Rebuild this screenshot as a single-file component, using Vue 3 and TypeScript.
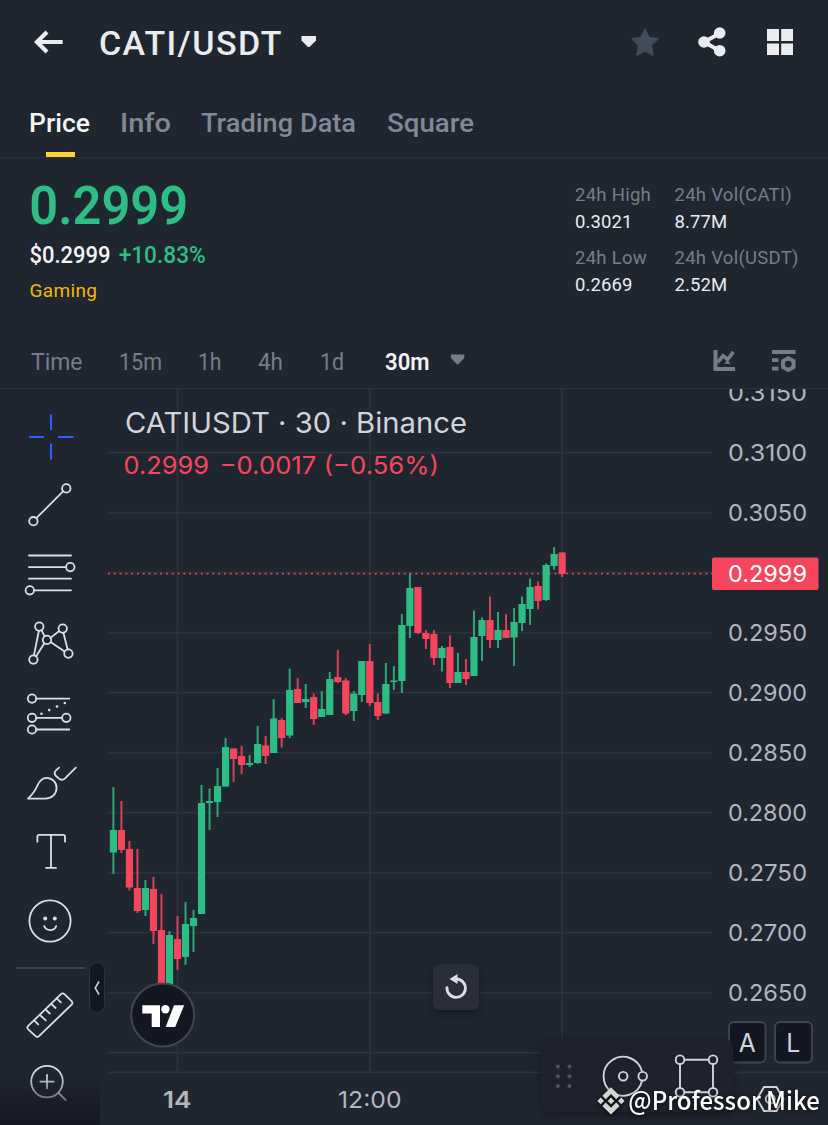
<script setup lang="ts">
type Candle = [high: number, top: number, bottom: number, low: number, up: 0 | 1]

const tabs = [
  { label: 'Price', width: 61 },
  { label: 'Info', width: 51 },
  { label: 'Trading Data', width: 155 },
  { label: 'Square', width: 87 },
]

const stats = [
  { label: '24h High', value: '0.3021' },
  { label: '24h Vol(CATI)', value: '8.77M' },
  { label: '24h Low', value: '0.2669' },
  { label: '24h Vol(USDT)', value: '2.52M' },
]

const intervals = [
  { label: 'Time', width: 51.5 },
  { label: '15m', width: 43 },
  { label: '1h', width: 23.5 },
  { label: '4h', width: 25 },
  { label: '1d', width: 24 },
]

const candles: Candle[] = [
  [787, 830, 852.5, 874, 1], [801, 830, 850, 853, 0], [841, 849, 887.5, 890.5, 0],
  [849, 888, 911, 913, 0], [880, 888, 910, 916, 1], [877, 889, 931, 944, 0],
  [894, 930, 984, 984, 0], [931, 935, 984, 984, 1], [916, 939, 959, 970, 0],
  [902, 924, 957, 965, 1], [910, 918, 926, 952, 1], [785, 803, 914, 914, 1],
  [788.5, 801, 803, 830, 1], [768, 786, 802, 817, 1], [738, 747, 786.5, 786.5, 1],
  [748.5, 748.5, 759, 782, 0], [746, 756, 765, 774, 0], [755, 763, 765, 767, 1],
  [726, 744, 763, 764, 1], [736, 745.5, 756, 764, 0], [699, 718.5, 753, 753, 1],
  [718, 720, 738, 747.5, 0], [668.5, 690, 735.5, 738, 1], [678, 689, 703, 703, 0],
  [684, 699, 702, 708, 1], [693.5, 697, 719, 725, 0], [691, 709, 717, 717, 1],
  [672, 679, 715, 715, 1], [650, 677, 682, 683, 0], [678, 680.5, 713.5, 715, 0],
  [691, 693.5, 711, 721, 1], [661, 661, 695, 702, 1], [644, 661, 703, 706, 0],
  [693.5, 702, 716, 720, 0], [663, 684, 713.5, 714, 1], [666, 680.5, 682, 690, 1],
  [614, 625, 681, 693, 1], [573.5, 588, 626, 638, 1], [587, 587, 633, 634, 0],
  [630, 633, 639, 649, 0], [630, 634, 658, 665, 0], [646, 648, 658, 671.5, 1],
  [635.5, 647, 683, 688, 0], [653, 672, 683, 683, 1], [659, 672, 679, 685, 0],
  [610.5, 637, 676, 676, 1], [617.5, 620, 636, 661, 1], [596.5, 620, 640, 648, 0],
  [612, 630, 640, 648, 1], [614, 630, 638, 638, 0], [608, 622, 637.5, 666, 1],
  [596.5, 604, 623, 631, 1], [578.5, 587, 609, 625, 1], [581.5, 586, 601, 609.5, 0],
  [563.5, 565, 600, 601, 1], [547, 554, 566, 570, 1], [552.5, 552.5, 574, 577, 0],
]
const candleX = (i: number) => 113.4 + i * 8.013

const priceLabels = ['0.3150', '0.3100', '0.3050', '', '0.2950', '0.2900', '0.2850', '0.2800', '0.2750', '0.2700', '0.2650']
const gridY = Array.from({ length: 11 }, (_, i) => 452.6 + i * 60)

interface Tool {
  name: string
  top: number
  height: number
  paths: string[]
  rings?: [number, number, number][]
  dots?: [number, number, number][]
  active?: boolean
}

const tools: Tool[] = [
  { name: 'cross', top: 401.5, height: 69.3, active: true, paths: ['M51 414V429.5M51 443V459M29 436.4H44M58 436.4H73.5'] },
  { name: 'trend', top: 470.8, height: 69.3, paths: ['M36.3 518L63.3 491'], rings: [[66.3, 488.2, 4.2], [33.4, 521, 4.2]] },
  { name: 'fib', top: 540.1, height: 69.3, paths: ['M29 555.6H71M29 567.3H66M29 578.8H71M34 590.4H71'], rings: [[70.3, 567.2, 4.2], [29.8, 590.4, 4.2]] },
  { name: 'pattern', top: 609.4, height: 69.3, paths: ['M38.9 631.2L33.9 655.8M41.5 630.6L44.7 636.8M50.3 638.3L59.3 631.4M63.3 633L67.7 649.8M50.6 642.5L64.6 651.9M44.4 643.6L36 656.8'], rings: [[39.3, 627, 4.2], [62.7, 629, 4.2], [47, 640.3, 4.2], [33.4, 660, 4.2], [68.4, 654, 4.2]] },
  { name: 'forecast', top: 678.7, height: 69.3, paths: ['M36.2 698.3H69.3M36.2 717.5H62M36.2 729.2H69.3'], rings: [[32, 698.3, 4.2], [32, 717.5, 4.2], [66.3, 717.5, 4.2], [32, 729.2, 4.2]], dots: [[41.5, 713.4, 1.3], [49.2, 709.8, 1.3], [57, 706.2, 1.3], [64.8, 702.7, 1.3]] },
  { name: 'brush', top: 748, height: 69.3, paths: ['M28 798.6C33 794 36 789 37.7 785C40 780 43 777.8 46.5 777.8C52 777.8 56.6 782.2 56.6 788C56.6 794 51.5 798.6 45 798.6Z', 'M59 767.6L56 770.3Q53.3 773 56 776L58.4 778.2Q61.8 781.3 65 778.3L75.8 767.6'] },
  { name: 'text', top: 817.3, height: 69.3, paths: ['M37.4 842V837Q37.4 835.2 39.2 835.2H63.2Q65 835.2 65 837V842M51 835.2V868.2M46 868.2H56'] },
  { name: 'emoji', top: 886.6, height: 69.3, paths: ['M44.2 925.6C46 931 54.6 931 56.2 925.6'], rings: [[50, 920.6, 20.6]], dots: [[45.2, 918, 2], [54.8, 918, 2]] },
]

const lowerTools: Tool[] = [
  { name: 'ruler', top: 980, height: 69, paths: ['M61 994.2Q62.7 992.5 64.4 994.2L71.6 1001.2Q73.3 1002.9 71.6 1004.6L39 1036.2Q37.3 1037.9 35.6 1036.2L28.2 1029.3Q26.5 1027.6 28.2 1025.9Z', 'M56.7 998.4L60.8 1002.4M51.2 1003.8L55.6 1008M45.5 1009.4L49.7 1013.5M39.8 1015L45.8 1020.3M34.2 1020.4L38.2 1024.4'] },
  { name: 'zoom', top: 1049, height: 69, paths: ['M40.3 1081.6H53.7M47 1075V1088.3', 'M58.5 1093L65.7 1100'], rings: [[47, 1081.6, 15.8]] },
]
</script>

<template>
  <main class="screen">
    <header class="topbar">
      <svg class="back" width="30" height="24" viewBox="0 0 30 24"><path d="M28.7 12H3M13 2L3 12L13 22" /></svg>
      <h1 class="pair">CATI/USDT</h1>
      <svg class="caret" width="16" height="12" viewBox="0 0 16 12"><path d="M.5 0H15V4.5L9 10.4Q7.7 11.5 6.4 10.4L.5 4.5Z" /></svg>
      <div class="actions">
        <svg width="30" height="30" viewBox="0 0 30 30"><path class="star" d="M15 2L18.8 10.6L27.9 11.7L21.2 18.2L23 28L15 23.6L7 28L8.8 18.2L2.1 11.7L11.2 10.6Z" /></svg>
        <svg width="30" height="30" viewBox="1 0 30 30"><path class="link" d="M7 15L22.5 6.5M7 15L22.5 23.7" /><circle cx="7" cy="15" r="5.8" /><circle cx="22.7" cy="6" r="5.8" /><circle cx="22.7" cy="23.7" r="5.8" /></svg>
        <svg width="30" height="30" viewBox="0 0 30 30"><path d="M2 2H14V14H2ZM16.2 2H28V14H16.2ZM2 16.4H14V28H2ZM16.2 16.4H28V28H16.2Z" /></svg>
      </div>
    </header>

    <nav class="tabs">
      <svg v-for="(t, i) in tabs" :key="t.label" class="tab" :class="{ current: i === 0 }" :width="t.width" height="40">
        <text x="0" y="26.5" :textLength="t.width" lengthAdjust="spacingAndGlyphs">{{ t.label }}</text>
      </svg>
    </nav>

    <section class="summary">
      <div class="quote">
        <svg class="last" width="170" height="50"><text x="-.8" y="43.3" textLength="159" lengthAdjust="spacingAndGlyphs">0.2999</text></svg>
        <svg class="change" width="190" height="30">
          <text x="-.5" y="22.8" textLength="81" lengthAdjust="spacingAndGlyphs">$0.2999</text>
          <text class="gain" x="88.7" y="22.8" textLength="87" lengthAdjust="spacingAndGlyphs">+10.83%</text>
        </svg>
        <a class="tag">Gaming</a>
      </div>
      <dl class="stats">
        <div v-for="s in stats" :key="s.label" class="stat">
          <dt>{{ s.label }}</dt>
          <dd>{{ s.value }}</dd>
        </div>
      </dl>
    </section>

    <nav class="intervals">
      <svg v-for="t in intervals" :key="t.label" :width="t.width" height="34">
        <text x="0" y="25.5" :textLength="t.width" lengthAdjust="spacingAndGlyphs">{{ t.label }}</text>
      </svg>
      <svg class="chosen" width="80" height="34">
        <text x="0" y="25.5" textLength="44.5" lengthAdjust="spacingAndGlyphs">30m</text>
        <path d="M66 10.5H79.3V14L73.5 20Q72.6 20.8 71.7 20L66 14Z" />
      </svg>
      <svg class="glyph" width="24" height="24" viewBox="0 0 24 24">
        <path d="M3.5 1V20H23" class="axis" /><path d="M5.5 13.5L11 6.7L15.5 10.5L21.5 2.8" class="line" /><path d="M12 14.7L15.3 11L18.6 14.7Z" />
      </svg>
      <svg class="glyph settings" width="26" height="26" viewBox="0 0 26 26">
        <path d="M1 1H24.5V5H1ZM1 9.3H7.5V13H1ZM1 17.7H7.5V21.5H1Z" />
        <path fill-rule="evenodd" d="M17.3 7L24.5 11V19.2L17.3 23.3L10.1 19.2V11ZM17.3 11.7A3.4 3.4 0 1 0 17.3 18.5A3.4 3.4 0 1 0 17.3 11.7Z" />
      </svg>
    </nav>

    <section class="workspace">
      <aside class="sidebar">
        <svg v-for="t in tools" :key="t.name" class="tool" :class="{ active: t.active }" width="100" :height="t.height" :viewBox="`0 ${t.top} 100 ${t.height}`">
          <path v-for="p in t.paths" :key="p" :d="p" />
          <circle v-for="(r, i) in t.rings" :key="'r' + i" :cx="r[0]" :cy="r[1]" :r="r[2]" />
          <circle v-for="(d, i) in t.dots" :key="'d' + i" class="dot" :cx="d[0]" :cy="d[1]" :r="d[2]" />
        </svg>
        <div class="rule"></div>
        <svg v-for="t in lowerTools" :key="t.name" class="tool" width="100" :height="t.height" :viewBox="`0 ${t.top} 100 ${t.height}`">
          <path v-for="p in t.paths" :key="p" :d="p" />
          <circle v-for="(r, i) in t.rings" :key="'r' + i" :cx="r[0]" :cy="r[1]" :r="r[2]" />
        </svg>
        <div class="fade"></div>
      </aside>

      <svg class="chart" width="728" height="736" viewBox="100 389 728 736">
        <g class="grid">
          <path v-for="y in gridY" :key="y" :d="`M108 ${y}H712`" />
          <path d="M177.5 389V1072M370 389V1072M562 389V1072M108 1072.3H828" />
        </g>
        <path class="last-line" d="M108 573.6H712" />
        <g v-for="(c, i) in candles" :key="i" :class="c[4] ? 'up' : 'down'">
          <rect class="wick" :x="candleX(i) - 1" :y="c[0]" width="2" :height="c[3] - c[0]" />
          <rect :x="candleX(i) - 3.6" :y="c[1]" width="7.2" :height="c[2] - c[1]" />
        </g>
        <text class="symbol" x="125" y="432.5" textLength="342" lengthAdjust="spacingAndGlyphs">CATIUSDT · 30 · Binance</text>
        <g class="legend">
          <text x="123.5" y="474.3" textLength="85.5" lengthAdjust="spacingAndGlyphs">0.2999</text>
          <text x="219.5" y="474.3" textLength="219.5" lengthAdjust="spacingAndGlyphs">−0.0017 (−0.56%)</text>
        </g>
        <g class="scale">
          <template v-for="(p, i) in priceLabels" :key="i">
            <text v-if="p" x="728" :y="400.5 + i * 60" textLength="79" lengthAdjust="spacingAndGlyphs">{{ p }}</text>
          </template>
          <rect class="badge" x="712" y="557.5" width="106.5" height="32.5" rx="2" />
          <text class="badge-text" x="728" y="581.7" textLength="79" lengthAdjust="spacingAndGlyphs">0.2999</text>
          <text class="day" x="163" y="1108" textLength="28.5" lengthAdjust="spacingAndGlyphs">14</text>
          <text x="338" y="1108" textLength="63.5" lengthAdjust="spacingAndGlyphs">12:00</text>
        </g>
        <circle class="brand" cx="162.7" cy="1015" r="31.5" />
        <path class="brand-mark" d="M142.3 1005.2H160V1027H151.7V1013.6H142.3ZM174 1005.2H184.2L175.2 1027H165.7Z" />
        <circle class="brand-mark" cx="165.4" cy="1009.3" r="4.2" />
        <g class="mode">
          <rect x="729" y="1022" width="36.5" height="40.5" rx="5" />
          <rect x="775" y="1022" width="37" height="40.5" rx="5" />
          <text x="738.7" y="1051.5" textLength="17" lengthAdjust="spacingAndGlyphs">A</text>
          <text x="786.3" y="1051.5" textLength="14" lengthAdjust="spacingAndGlyphs">L</text>
        </g>
        <g class="outline">
          <path d="M764 1087H776.5L783.5 1099L776.5 1111H764L757 1099Z" /><circle cx="770.3" cy="1099" r="4.5" />
        </g>
      </svg>

      <button class="collapse"><svg width="10" height="18" viewBox="0 0 10 18"><path d="M7 2.5L3.2 9L7 15.5" /></svg></button>

      <button class="reset">
        <svg width="28" height="28" viewBox="0 0 28 28"><path class="arc" d="M5 14.6A9.2 9.2 0 1 0 14.5 6" /><path d="M7.5 6L15.5 1V11Z" /></svg>
      </button>

      <div class="shapes">
        <svg width="192" height="73" viewBox="541 1039 192 73">
          <g class="grip"><template v-for="y in [1066.6, 1076.2, 1085.9]" :key="y"><circle cx="557.8" :cy="y" r="2" /><circle cx="569.4" :cy="y" r="2" /></template></g>
          <g class="outline">
            <path d="M642 1071.5A19.5 19.5 0 1 0 642 1081" /><circle cx="623.2" cy="1076.2" r="4.3" /><circle cx="642.7" cy="1076.2" r="4.3" />
            <path d="M684.5 1059.7H708.5M684.5 1092.3H708.5M680 1064V1088M713 1064V1088" />
            <circle cx="680" cy="1059.7" r="4.3" /><circle cx="713" cy="1059.7" r="4.3" /><circle cx="680" cy="1092.3" r="4.3" /><circle cx="713" cy="1092.3" r="4.3" />
          </g>
        </svg>
      </div>

      <svg class="author" width="228" height="40" viewBox="597 1085 228 40">
        <path class="logo" d="M611 1087.3L619.6 1095.8L616.2 1099.2L611 1094L605.8 1099.2L602.4 1095.8ZM611 1114.5L619.6 1106L616.2 1102.6L611 1107.8L605.8 1102.6L602.4 1106ZM611 1097.6L614.3 1100.9L611 1104.2L607.7 1100.9ZM600.7 1097.6L604 1100.9L600.7 1104.2L597.4 1100.9ZM621.3 1097.6L624.6 1100.9L621.3 1104.2L618 1100.9Z" />
        <text x="628.3" y="1110" textLength="191.5" lengthAdjust="spacingAndGlyphs">@Professor Mike</text>
      </svg>
    </section>
  </main>
</template>

<style>
body { margin: 0; background: #202630; }
</style>

<style scoped>
.screen { width: 828px; height: 1125px; overflow: hidden; background: #202630; color: #eaecef; font-family: Roboto, "Liberation Sans", sans-serif; }
svg { display: block; flex: none; overflow: visible; }
button { border: 0; padding: 0; }

.topbar { height: 88px; box-sizing: border-box; padding: 0 33px 0 34px; display: flex; align-items: center; }
.back { margin-top: -4px; fill: none; stroke: #eaecef; stroke-width: 4.2; }
.pair { margin: -2px 0 0 35px; width: 183px; font-size: 34px; line-height: 44px; font-weight: 500; letter-spacing: 1.4px; white-space: nowrap; }
.caret { margin: -4px 0 0 19px; fill: #eaecef; }
.actions { margin: -4px 0 0 auto; display: flex; gap: 37.5px; fill: #eaecef; }
.star { fill: #434c5a; stroke: #434c5a; stroke-width: 1.5; stroke-linejoin: round; }
.link { stroke: #eaecef; stroke-width: 4; fill: none; }

.tabs { height: 70px; box-sizing: border-box; padding: 17px 29px 0; display: flex; gap: 30.2px; border-bottom: 1px solid #2b313b; }
.tab { font-size: 26px; font-weight: 500; fill: #818896; }
.current { fill: #f3f4f6; height: 53px; background: linear-gradient(#fcd535, #fcd535) 16.5px 47px / 29px 5px no-repeat; }

.summary { height: 176px; display: flex; justify-content: space-between; }
.quote { padding: 23px 0 0 29.5px; }
.last { fill: #2ebd85; font-size: 53px; font-weight: 600; }
.change { margin-top: 9px; fill: #f3f4f6; font-size: 23px; font-weight: 500; }
.gain { fill: #2ebd85; }
.tag { display: block; margin-top: 9px; font-size: 19px; line-height: 24px; letter-spacing: .35px; color: #f0b90b; }
.stats { margin: 24px 0 0; width: 253px; display: grid; grid-template-columns: 99.5px 1fr; grid-auto-rows: 63.4px; }
.stat { white-space: nowrap; }
dt { font-size: 18.5px; line-height: 26px; letter-spacing: .28px; color: #767d8a; }
dd { margin: 1px 0 0; font-size: 18.5px; line-height: 26px; letter-spacing: .1px; color: #eaecef; }

.intervals { height: 55px; box-sizing: border-box; padding: 10px 0 0 31px; display: flex; gap: 36.4px; border-bottom: 1px solid #2b313b; fill: #767d8a; font-size: 24px; }
.chosen { margin-left: 5.5px; font-weight: 600; }
.chosen text { fill: #f3f4f6; }
.glyph { margin: 5px 0 0 210px; }
.settings { margin-left: -1.5px; }
.axis { fill: none; stroke: #767d8a; stroke-width: 4; }
.line { fill: none; stroke: #767d8a; stroke-width: 3.6; }

.workspace { position: relative; display: flex; height: 736px; }
.sidebar { width: 100px; padding-top: 12.5px; box-sizing: border-box; position: relative; overflow: hidden; }
.tool { fill: none; stroke: #dcdee6; stroke-width: 1.8; stroke-linecap: round; stroke-linejoin: round; }
.active { stroke: #2962ff; stroke-width: 2; stroke-linecap: butt; }
.dot { fill: #dcdee6; stroke: none; }
.rule { margin: 11px 0 11px 15.5px; width: 69px; height: 2px; background: #3e424d; }
.fade { position: absolute; left: 0; bottom: 0; width: 100px; height: 54px; background: linear-gradient(rgba(19, 23, 34, 0), #131722); }

.chart { overflow: hidden; font-family: Inter, "Liberation Sans", sans-serif; }
.grid { stroke: #2c323c; stroke-width: 1.7; fill: none; }
.last-line { stroke: #e5485a; stroke-width: 1.9; stroke-dasharray: 1.9 3.9; }
.up { fill: #2ebd85; }
.down { fill: #f6465d; }
.wick { opacity: .85; }
.symbol { fill: #d1d4dc; font-size: 28.5px; }
.legend { fill: #f6465d; font-size: 24px; }
.scale { fill: #b2b5be; font-size: 23.5px; }
.badge { fill: #f6465d; }
.scale .badge-text { fill: #fff; }
.day { font-weight: 600; }
.brand { fill: #131722; stroke: #434651; stroke-width: 2; }
.brand-mark { fill: #fff; }
.mode rect { fill: #131722; stroke: #434651; stroke-width: 1.8; }
.mode text { fill: #d1d4dc; font-size: 26px; }
.outline { fill: none; stroke: #d1d4dc; stroke-width: 1.9; }

.collapse { position: absolute; left: 89px; top: 573px; width: 16px; height: 51px; box-sizing: border-box; border: 1.8px solid #2c313c; border-radius: 8px; background: #131722; display: flex; align-items: center; justify-content: center; }
.collapse path { fill: none; stroke: #d1d4dc; stroke-width: 1.5; }
.reset { position: absolute; left: 433px; top: 575px; width: 46px; height: 46px; border-radius: 6px; background: #2a2e39; box-shadow: 0 3px 6px rgba(10, 12, 20, .5); display: flex; align-items: center; justify-content: center; fill: #dcdee6; }
.arc { fill: none; stroke: #dcdee6; stroke-width: 2.8; stroke-linecap: round; }
.shapes { position: absolute; left: 541px; top: 650px; width: 192px; height: 73px; border-radius: 9px; background: #1e222d; box-shadow: 0 3px 8px rgba(10, 12, 20, .5); }
.grip { fill: #50535e; }
.author { position: absolute; left: 597px; top: 696px; filter: drop-shadow(0 1px 2px rgba(0, 0, 0, .7)); font-family: "Noto Sans CJK SC", "Noto Sans", sans-serif; font-size: 25px; font-weight: 500; fill: #fff; }
.logo { fill: #d5d5d5; }
</style>
